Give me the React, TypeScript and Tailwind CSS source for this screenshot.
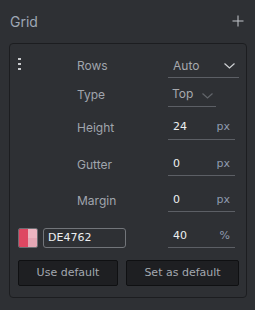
import React from "react";

const inter = { fontFamily: "Inter, 'Noto Sans', sans-serif" };
const deja = { fontFamily: "'DejaVu Sans', Verdana, sans-serif" };

function Chevron({ className }: { className?: string }) {
  return (
    <svg width="11" height="6" viewBox="0 0 11 6" className={className} fill="none">
      <path d="M0.5 0.5 L5.5 5 L10.5 0.5" stroke="currentColor" strokeWidth="1.2" />
    </svg>
  );
}

function NumField({ value, unit, h }: { value: string; unit: string; h: string }) {
  return (
    <div className={`w-[67px] ${h} flex items-center border-b border-[#5c5f65] pl-[5px] pr-[5px]`}>
      <span className="text-[11px] text-[#eceef0] flex-1" style={deja}>{value}</span>
      <span className="text-[11px] text-[#8e9bb0]" style={deja}>{unit}</span>
    </div>
  );
}

export default function App() {
  return (
    <div className="w-[255px] h-[310px] bg-[#2e3034] overflow-hidden" style={inter}>
      <div className="flex items-center justify-between pl-[10px] pr-[11px] h-[43px] pb-[1px]">
        <span className="text-[14px] text-[#9ea7b5]">Grid</span>
        <svg width="12" height="12" viewBox="0 0 12 12" className="text-[#c4c7cc]">
          <path d="M6 0.5 V11.5 M0.5 6 H11.5" stroke="currentColor" strokeWidth="1" />
        </svg>
      </div>
      <div className="ml-[9px] w-[238px] h-[255px] border border-[#1c1d20] rounded-[4px] pt-[10px]">
        {/* Row: Rows */}
        <div className="flex items-center h-[24px]">
          <div className="w-[67px] flex justify-start pl-[8px] -mt-[4px]">
            <div className="flex flex-col gap-[3px]">
              <div className="w-[3px] h-[2px] bg-[#c9cbce]" />
              <div className="w-[3px] h-[2px] bg-[#c9cbce]" />
              <div className="w-[3px] h-[2px] bg-[#c9cbce]" />
            </div>
          </div>
          <div className="w-[91px] text-[12px] text-[#a0a5ad]">Rows</div>
          <div className="w-[71px] h-[24px] flex items-center justify-between border-b border-[#5c5f65] pl-[5px] pr-[4px]">
            <span className="text-[12px] text-[#a7a9ae]">Auto</span>
            <Chevron className="text-[#cfd1d4]" />
          </div>
        </div>
        {/* Row: Type */}
        <div className="flex items-center h-[25px] mt-[4px]">
          <div className="w-[67px]" />
          <div className="w-[91px] text-[12px] text-[#a0a5ad]">Type</div>
          <div className="w-[48px] h-[25px] flex items-center justify-between border-b border-[#5c5f65] pl-[4px] pr-[3px]">
            <span className="text-[12px] text-[#a7a9ae]">Top</span>
            <Chevron className="text-[#62656a] mt-[3px]" />
          </div>
        </div>
        {/* Row: Height */}
        <div className="flex items-center h-[24px] mt-[9px]">
          <div className="w-[67px]" />
          <div className="w-[91px] text-[12px] text-[#a0a5ad]">Height</div>
          <NumField value="24" unit="px" h="h-[24px]" />
        </div>
        {/* Row: Gutter */}
        <div className="flex items-center h-[23px] mt-[13px]">
          <div className="w-[67px]" />
          <div className="w-[91px] text-[12px] text-[#a0a5ad]">Gutter</div>
          <NumField value="0" unit="px" h="h-[23px]" />
        </div>
        {/* Row: Margin */}
        <div className="flex items-center h-[23px] mt-[13px]">
          <div className="w-[67px]" />
          <div className="w-[91px] text-[12px] text-[#a0a5ad]">Margin</div>
          <NumField value="0" unit="px" h="h-[23px]" />
        </div>
        {/* Row: colour */}
        <div className="flex items-end h-[23px] mt-[13px]">
          <div className="w-[158px] flex items-center pl-[8px] gap-[5px] h-[20px]">
            <div className="w-[20px] h-[20px] rounded-[2px] border border-[#6b6e73] flex overflow-hidden">
              <div className="flex-1 bg-[#de4762]" />
              <div className="flex-1 flex flex-col">
                <div className="flex-1 bg-[#ecb5c1]" />
                <div className="flex-1 bg-[#e4a7b5]" />
              </div>
            </div>
            <div className="w-[83px] h-[20px] rounded-[3px] border border-[#72757a] flex items-center pl-[4px]">
              <span className="text-[11px] text-[#eceef0]" style={deja}>DE4762</span>
            </div>
          </div>
          <div className="w-[67px] h-[23px] flex items-center border-b border-[#5c5f65] pl-[5px] pr-[5px]">
            <span className="text-[11px] text-[#eceef0] flex-1" style={deja}>40</span>
            <span className="text-[11px] text-[#8e9bb0]" style={deja}>%</span>
          </div>
        </div>
        {/* Buttons */}
        <div className="flex gap-[8px] pl-[8px] mt-[12px]">
          <button className="w-[100px] h-[26px] bg-[#1e1f22] border border-[#0f1012] rounded-[2px] text-[11px] text-[#a3a8b0]" style={deja}>
            Use default
          </button>
          <button className="w-[113px] h-[26px] bg-[#1e1f22] border border-[#0f1012] rounded-[2px] text-[11px] text-[#a3a8b0]" style={deja}>
            Set as default
          </button>
        </div>
      </div>
    </div>
  );
}
